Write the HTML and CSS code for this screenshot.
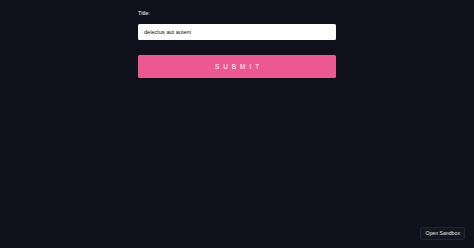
FILE: index.html
```html
<!DOCTYPE html>
<html lang="en">
<head>
<meta charset="utf-8">
<title>Form</title>
<link rel="stylesheet" href="styles.css">
</head>
<body>
<form class="form">
  <label class="label" for="title">Title:</label>
  <input class="input" id="title" type="text" value="delectus aut autem">
  <button class="submit" type="submit">Submit</button>
</form>
<button class="sandbox" type="button">Open Sandbox</button>
</body>
</html>
```
FILE: styles.css
```css
html, body {
  margin: 0;
  padding: 0;
  background: #0e101c;
  height: 100%;
}
body {
  font-family: "Liberation Sans", Arial, sans-serif;
}
.form {
  display: flex;
  flex-direction: column;
  width: 198px;
  margin-left: 138px;
  padding-top: 8px;
}
.label {
  display: block;
  color: #ffffff;
  font-size: 5.6px;
  line-height: 11px;
  height: 11px;
  margin-bottom: 5px;
}
.input {
  box-sizing: border-box;
  height: 16px;
  width: 100%;
  border: none;
  border-radius: 1.6px;
  background: #ffffff;
  padding: 0 6px;
  margin: 0;
  font-family: "Liberation Sans", Arial, sans-serif;
  font-size: 5.6px;
  color: #111;
  outline: none;
}
.submit {
  box-sizing: border-box;
  height: 23px;
  width: 100%;
  margin: 15px 0 0 0;
  border: none;
  border-radius: 1.6px;
  background: #ec5990;
  color: #ffffff;
  font-family: "Liberation Sans", Arial, sans-serif;
  font-size: 6.4px;
  font-weight: 100;
  text-transform: uppercase;
  letter-spacing: 4px;
  text-indent: 4px;
  padding: 0;
}
.sandbox {
  position: fixed;
  right: 9px;
  bottom: 8px;
  box-sizing: border-box;
  height: 13px;
  padding: 0 4px;
  background: #151720;
  border: 1px solid #23252d;
  border-radius: 2px;
  color: #e6e6e6;
  font-family: "Liberation Sans", Arial, sans-serif;
  font-size: 5.2px;
  line-height: 11px;
}
```
